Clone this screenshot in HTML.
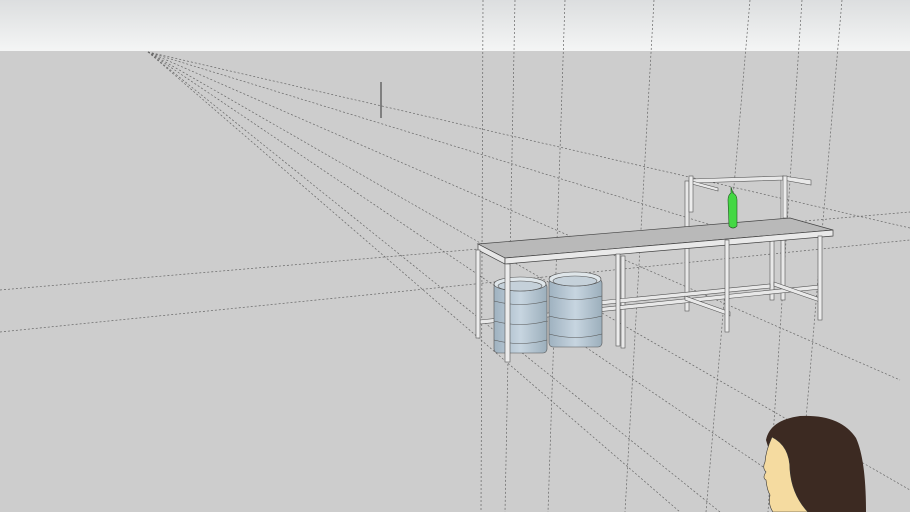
<!DOCTYPE html>
<html><head><style>html,body{margin:0;padding:0;width:910px;height:512px;overflow:hidden;background:#cdcdcd}</style></head>
<body>
<svg width="910" height="512" viewBox="0 0 910 512" xmlns="http://www.w3.org/2000/svg">
<defs>
<linearGradient id="sky" x1="0" y1="0" x2="0" y2="1"><stop offset="0" stop-color="#dcdedf"/><stop offset="1" stop-color="#f4f5f5"/></linearGradient>
<linearGradient id="keg" x1="0" y1="0" x2="1" y2="0"><stop offset="0" stop-color="#9fb2c0"/><stop offset="0.5" stop-color="#c7d5e0"/><stop offset="1" stop-color="#9cafbc"/></linearGradient>
</defs>
<rect width="910" height="51" fill="url(#sky)"/>
<rect y="51" width="910" height="461" fill="#cdcdcd"/>
<g stroke="#666" stroke-width="0.7" stroke-dasharray="2,2" fill="none">
<line x1="148" y1="52" x2="910" y2="228"/>
<line x1="148" y1="52" x2="760" y2="240"/>
<line x1="148" y1="52" x2="910" y2="490"/>
<line x1="148" y1="52" x2="830" y2="512"/>
<line x1="148" y1="52" x2="720" y2="512"/>
<line x1="148" y1="52" x2="680" y2="512"/>
<line x1="148" y1="52" x2="900" y2="380"/>
<line x1="0" y1="290" x2="910" y2="212"/>
<line x1="0" y1="332" x2="910" y2="240"/>
<line x1="483" y1="0" x2="481" y2="512"/>
<line x1="515" y1="0" x2="505" y2="512"/>
<line x1="565" y1="0" x2="548" y2="512"/>
<line x1="654" y1="0" x2="625" y2="512"/>
<line x1="750" y1="0" x2="706" y2="512"/>
<line x1="802" y1="0" x2="768" y2="512"/>
<line x1="842" y1="0" x2="798" y2="512"/>
</g>
<line x1="381" y1="82" x2="381" y2="118" stroke="#333" stroke-width="1"/>
<!-- back frame -->
<g stroke="#555" stroke-width="0.6" fill="#e8e8e8">
<rect x="685" y="181" width="4" height="130"/>
<rect x="781" y="178" width="4" height="122"/>
<rect x="770" y="230" width="4" height="70"/>
<rect x="621" y="256" width="4" height="92"/>
<polygon points="692,179 783,176 783,180 692,183"/>
<polygon points="692,181 718,188 718,191 692,184"/>
<polygon points="783,176 811,180 811,185 783,180"/>
<polygon points="480,320 820,285 820,289 480,324"/>
<polygon points="598,301 770,284 770,288 598,305"/>
<polygon points="685,296 730,312 730,316 685,300"/>
<polygon points="774,282 820,298 820,302 774,286"/>
</g>
<!-- kegs -->
<g stroke="#555" stroke-width="0.6">
<rect x="549" y="279" width="53" height="68" rx="4" fill="url(#keg)"/>
<ellipse cx="575" cy="279" rx="26" ry="7" fill="#dfe6ea"/>
<ellipse cx="575" cy="281" rx="22" ry="5" fill="#c5d1da"/>
<path d="M549 296 Q575 303 602 296 M549 316 Q575 323 602 316 M549 334 Q575 341 602 334" fill="none"/>
<rect x="494" y="283" width="53" height="70" rx="4" fill="url(#keg)"/>
<ellipse cx="520" cy="284" rx="26" ry="7" fill="#dfe6ea"/>
<ellipse cx="520" cy="286" rx="22" ry="5" fill="#c5d1da"/>
<path d="M494 301 Q520 308 547 301 M494 321 Q520 328 547 321 M494 340 Q520 347 547 340" fill="none"/>
</g>
<!-- tabletop -->
<g stroke="#444" stroke-width="0.7">
<polygon points="478,244 790,218 833,230 505,258" fill="#b9b9b9"/>
<polygon points="478,244 505,258 505,264 478,250" fill="#e6e6e6"/>
<polygon points="505,258 833,230 833,236 505,264" fill="#e9e9e9"/>
</g>
<!-- legs -->
<g stroke="#555" stroke-width="0.6" fill="#ececec">
<rect x="476" y="250" width="4" height="88"/>
<rect x="505" y="264" width="5" height="98"/>
<rect x="616" y="254" width="4" height="92"/>
<rect x="725" y="240" width="4" height="92"/>
<rect x="818" y="236" width="4" height="84"/>
<rect x="689" y="176" width="4" height="36"/>
<rect x="783" y="176" width="4" height="42"/>
</g>
<!-- bottle -->
<path d="M731 187 L733 193 Q737 195 737 200 L737 226 Q733 230 729 226 L728 200 Q728 195 731 193 Z" fill="#44d844" stroke="#225522" stroke-width="0.6"/>
<!-- person -->
<path d="M766 440 Q770 420 800 416 Q840 414 856 438 Q866 460 866 512 L792 512 Q780 500 775 470 Z" fill="#3c2a22"/>
<path d="M772 437 Q790 446 790 470 Q792 495 808 512 L773 512 Q768 505 770 495 Q767 490 766 480 Q762 478 766 472 Q762 468 765 462 Q766 450 772 437 Z" fill="#f5dba0" stroke="#333" stroke-width="0.6"/>
</svg>
</body></html>
